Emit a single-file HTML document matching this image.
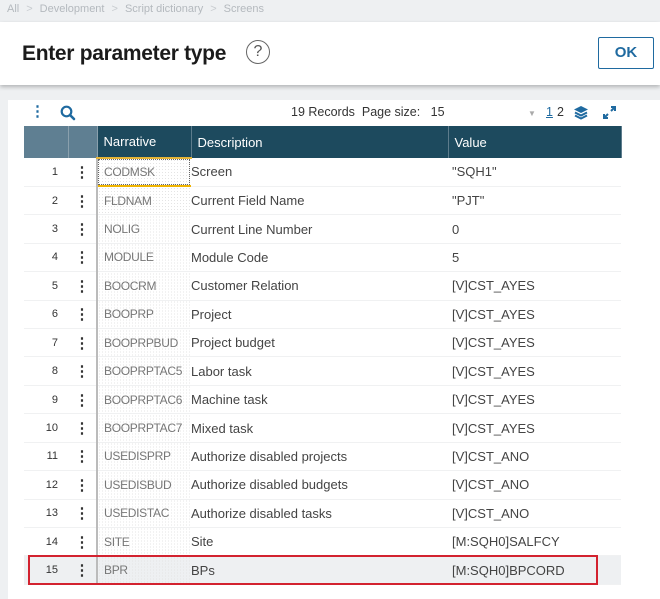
<!DOCTYPE html>
<html><head><meta charset="utf-8"><style>
*{margin:0;padding:0;box-sizing:border-box}
body{width:660px;height:599px;overflow:hidden;background:#eef0f2;font-family:"Liberation Sans",sans-serif;position:relative}
.bc{position:absolute;left:7px;top:3px;font-size:11px;color:#b4b9be}
.bc span{margin:0 7px;color:#c8ccd0}
.hdr{position:absolute;left:0;top:22px;width:660px;height:63px;background:#fff;box-shadow:0 2px 4px rgba(0,0,0,.25)}
.title{position:absolute;left:22px;top:20px;font-size:21px;font-weight:bold;color:#1b1b1b;letter-spacing:-.3px}
.help{position:absolute;left:246px;top:18px;width:24px;height:24px;border:1.5px solid #666;border-radius:50%;text-align:center;font-size:16px;line-height:21px;color:#555}
.ok{position:absolute;left:598px;top:15px;width:56px;height:32px;border:1.5px solid #1f6aa0;border-radius:2px;text-align:center;line-height:29px;font-size:15px;font-weight:bold;color:#1f6aa0}
.panel{position:absolute;left:8px;top:100px;width:652px;height:499px;background:#fff}
.tb{position:absolute;top:105px;font-size:12.5px;color:#333}
table{position:absolute;left:24px;top:126px;border-collapse:collapse;font-size:13px;table-layout:fixed}
th{background:#1d4a5e;color:#fff;font-weight:normal;text-align:left;height:32px;padding-left:6px;border-right:1px solid #5d7c8c;font-size:13px}
th.g{background:#5f7f92;border-right:1px solid #8aa0ad}
td{height:28.43px;padding-left:0;color:#444;border-bottom:1px solid #f0f1f2;white-space:nowrap;overflow:hidden}
td.n{text-align:right;padding-right:10px;font-size:11px;color:#333;background:#fff}
td.d{text-align:center;padding:0;font-weight:bold;font-size:15px;color:#333;border-right:2px solid #bbb}
td.nar{color:#777;padding-left:6px;font-size:12px;letter-spacing:-.3px;background-image:radial-gradient(#e4e4e4 0.6px,transparent 0.7px);background-size:3px 3px;width:94px}
td.v{color:#444;padding-left:4px}
tr.sel td{background-color:#eef0f2}
.red{position:absolute;left:28px;top:555px;width:570px;height:30px;border:2px solid #d3222f}
</style></head><body>
<div class="bc">All<span>&gt;</span>Development<span>&gt;</span>Script dictionary<span>&gt;</span>Screens</div>
<div class="hdr"><div class="title">Enter parameter type</div><div class="help">?</div><div class="ok">OK</div></div>
<div class="panel"></div>
<div class="tb" style="left:30px;color:#1f6aa0;font-weight:bold;font-size:15px;top:102px">⋮</div>
<svg style="position:absolute;left:60px;top:105px" width="16" height="16" viewBox="0 0 16 16"><circle cx="6.5" cy="6.5" r="4.8" fill="none" stroke="#1f6aa0" stroke-width="2.2"/><path d="M10 10l4 4" stroke="#1f6aa0" stroke-width="2.6" stroke-linecap="round"/></svg>
<div class="tb" style="left:291px">19 Records&nbsp; Page size:&nbsp;&nbsp; 15</div>
<div class="tb" style="left:528px;color:#aaa;font-size:8px;top:109px">▼</div>
<div class="tb" style="left:546px;color:#1f6aa0;text-decoration:underline">1</div>
<div class="tb" style="left:557px">2</div>
<svg style="position:absolute;left:573px;top:105px" width="16" height="15" viewBox="0 0 16 15"><path d="M8 1L15 4.5 8 8 1 4.5z" fill="#1f6aa0"/><path d="M2 7.5L8 10.5 14 7.5M2 10.5L8 13.5 14 10.5" fill="none" stroke="#1f6aa0" stroke-width="2"/></svg>
<svg style="position:absolute;left:602px;top:105px" width="15" height="15" viewBox="0 0 15 15"><path d="M9 2h4v4M13 2L9 6M6 13H2V9M2 13l4-4" fill="none" stroke="#1f6aa0" stroke-width="2"/></svg>
<table>
<colgroup><col style="width:44px"><col style="width:29px"><col style="width:94px"><col style="width:257px"><col style="width:173px"></colgroup>
<tr><th class="g"></th><th class="g"></th><th style="border-bottom:2px solid #e5b437">Narrative</th><th>Description</th><th>Value</th></tr>
<tr><td class="n">1</td><td class="d">⋮</td><td class="nar" style="outline:1px dotted #666;outline-offset:-2px;border-bottom:2px solid #f0b400">CODMSK</td><td>Screen</td><td class="v">"SQH1"</td></tr>
<tr><td class="n">2</td><td class="d">⋮</td><td class="nar">FLDNAM</td><td>Current Field Name</td><td class="v">"PJT"</td></tr>
<tr><td class="n">3</td><td class="d">⋮</td><td class="nar">NOLIG</td><td>Current Line Number</td><td class="v">0</td></tr>
<tr><td class="n">4</td><td class="d">⋮</td><td class="nar">MODULE</td><td>Module Code</td><td class="v">5</td></tr>
<tr><td class="n">5</td><td class="d">⋮</td><td class="nar">BOOCRM</td><td>Customer Relation</td><td class="v">[V]CST_AYES</td></tr>
<tr><td class="n">6</td><td class="d">⋮</td><td class="nar">BOOPRP</td><td>Project</td><td class="v">[V]CST_AYES</td></tr>
<tr><td class="n">7</td><td class="d">⋮</td><td class="nar">BOOPRPBUD</td><td>Project budget</td><td class="v">[V]CST_AYES</td></tr>
<tr><td class="n">8</td><td class="d">⋮</td><td class="nar">BOOPRPTAC5</td><td>Labor task</td><td class="v">[V]CST_AYES</td></tr>
<tr><td class="n">9</td><td class="d">⋮</td><td class="nar">BOOPRPTAC6</td><td>Machine task</td><td class="v">[V]CST_AYES</td></tr>
<tr><td class="n">10</td><td class="d">⋮</td><td class="nar">BOOPRPTAC7</td><td>Mixed task</td><td class="v">[V]CST_AYES</td></tr>
<tr><td class="n">11</td><td class="d">⋮</td><td class="nar">USEDISPRP</td><td>Authorize disabled projects</td><td class="v">[V]CST_ANO</td></tr>
<tr><td class="n">12</td><td class="d">⋮</td><td class="nar">USEDISBUD</td><td>Authorize disabled budgets</td><td class="v">[V]CST_ANO</td></tr>
<tr><td class="n">13</td><td class="d">⋮</td><td class="nar">USEDISTAC</td><td>Authorize disabled tasks</td><td class="v">[V]CST_ANO</td></tr>
<tr><td class="n">14</td><td class="d">⋮</td><td class="nar">SITE</td><td>Site</td><td class="v">[M:SQH0]SALFCY</td></tr>
<tr class="sel"><td class="n">15</td><td class="d">⋮</td><td class="nar">BPR</td><td>BPs</td><td class="v">[M:SQH0]BPCORD</td></tr>
</table>
<div class="red"></div>
</body></html>
